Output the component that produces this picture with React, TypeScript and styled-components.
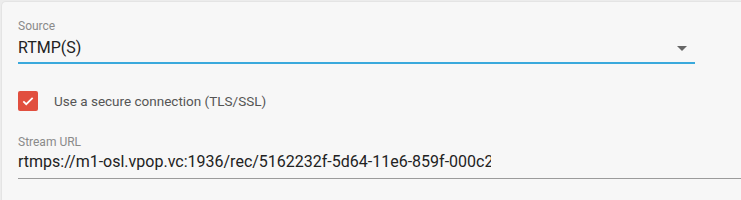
import React from "react";
import styled, { createGlobalStyle } from "styled-components";

const GlobalStyle = createGlobalStyle`
  html, body {
    margin: 0;
    padding: 0;
    background: #ececec;
    overflow: hidden;
  }
  body {
    font-family: Roboto, "Liberation Sans", Arial, sans-serif;
  }
`;

const Card = styled.div`
  margin: 1px 0 0 1px;
  width: calc(100vw - 1px);
  height: calc(100vh - 1px);
  box-sizing: border-box;
  padding: 17px 0 0 16px;
  background: #f7f7f7;
  border: 1px solid #e4e4e4;
  border-right: 0;
  border-bottom: 0;
  border-radius: 5px 0 0 0;
  display: flex;
  flex-direction: column;
`;

const Field = styled.div<{ $width?: number; $focused?: boolean }>`
  width: ${p => (p.$width ? `${p.$width}px` : "auto")};
  align-self: ${p => (p.$width ? "flex-start" : "stretch")};
  display: flex;
  flex-direction: column;
  border-bottom: ${p => (p.$focused ? "2px solid #3aa9dc" : "1px solid #9b9b9b")};
`;

const Label = styled.label`
  font-size: 12px;
  line-height: 14px;
  color: #8a8a8a;
`;

const SelectRow = styled.div`
  display: flex;
  align-items: center;
  justify-content: space-between;
  padding: 5px 8px 5px 0;
`;

const Value = styled.span`
  font-size: 16px;
  line-height: 19px;
  color: #222;
`;

const Caret = styled.span`
  width: 0;
  height: 0;
  border-left: 5px solid transparent;
  border-right: 5px solid transparent;
  border-top: 5px solid #666;
  margin-top: 2px;
`;

const CheckRow = styled.label`
  display: flex;
  align-items: center;
  gap: 16px;
  margin-top: 27px;
  font-size: 13.5px;
  line-height: 16px;
  color: #555;
`;

const Box = styled.span<{ $checked: boolean }>`
  width: 20px;
  height: 20px;
  border-radius: 2px;
  background: ${p => (p.$checked ? "#e14f3f" : "transparent")};
  display: flex;
  align-items: center;
  justify-content: center;
`;

const UrlField = styled(Field)`
  margin-top: 24px;
`;

const TextInput = styled.input<{ $width: number }>`
  width: ${p => p.$width}px;
  border: 0;
  background: transparent;
  padding: 3px 0 7px;
  margin: 0;
  font-family: inherit;
  font-size: 16px;
  line-height: 19px;
  color: #222;
  &:focus {
    outline: none;
  }
`;

const App: React.FC = () => {
  return (
    <>
      <GlobalStyle />
      <Card>
        <Field $width={677} $focused>
          <Label>Source</Label>
          <SelectRow>
            <Value>RTMP(S)</Value>
            <Caret />
          </SelectRow>
        </Field>
        <CheckRow>
          <Box $checked>
            <svg width="14" height="14" viewBox="0 0 24 24">
              <path d="M4 12.5l5 5L20 6.5" fill="none" stroke="#fff" strokeWidth="3" />
            </svg>
          </Box>
          Use a secure connection (TLS/SSL)
        </CheckRow>
        <UrlField>
          <Label>Stream URL</Label>
          <TextInput
            $width={473}
            readOnly
            value="rtmps://m1-osl.vpop.vc:1936/rec/5162232f-5d64-11e6-859f-000c29b0f2e1"
          />
        </UrlField>
      </Card>
    </>
  );
};

export default App;
